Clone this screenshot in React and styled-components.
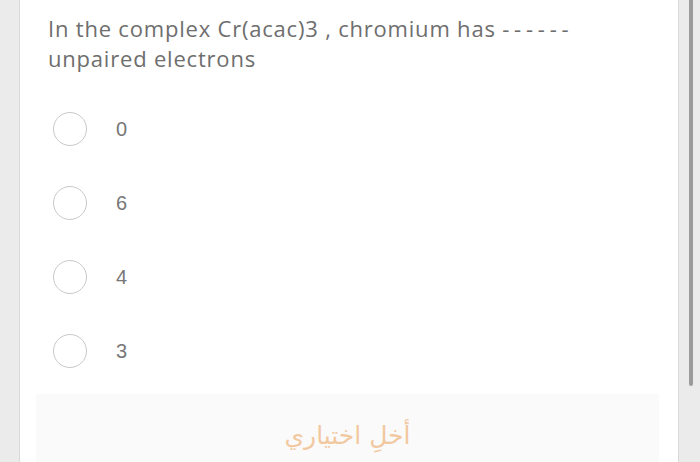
import React, { useState } from "react";
import styled, { createGlobalStyle } from "styled-components";

const GlobalStyle = createGlobalStyle`
  html, body {
    margin: 0;
    padding: 0;
    overflow: hidden;
    background: #ebebeb;
  }
`;

const Page = styled.div`
  display: flex;
  height: 462px;
  width: 700px;
  background: #ebebeb;
  overflow: hidden;
`;

const Card = styled.div`
  margin-left: 19px;
  width: 660px;
  border-left: 1px solid #dadada;
  border-right: 1px solid #dadada;
  background: #ffffff;
  padding: 13px 19px 0 16px;
  box-sizing: border-box;
  display: flex;
  flex-direction: column;
`;

const Content = styled.div`
  padding-left: 12px;
`;

const Question = styled.div`
  font-family: "Open Sans", "Liberation Sans", Arial, sans-serif;
  font-size: 22px;
  line-height: 30px;
  letter-spacing: 0.8px;
  color: #6e6e6e;
`;

const Blank = styled.span`
  letter-spacing: 4.8px;
`;

const Options = styled.div`
  margin-top: 19px;
  display: flex;
  flex-direction: column;
`;

const Option = styled.label`
  display: flex;
  align-items: center;
  height: 74px;
  gap: 29px;
  margin-left: 5px;
  cursor: pointer;
`;

const Radio = styled.span`
  width: 32px;
  height: 32px;
  border-radius: 50%;
  border: 1.5px solid ${(p) => (p.$checked ? "#888" : "#c9c9c9")};
  box-sizing: content-box;
  display: flex;
  align-items: center;
  justify-content: center;
  &::after {
    content: "";
    width: 15px;
    height: 15px;
    border-radius: 50%;
    background: ${(p) => (p.$checked ? "#888" : "transparent")};
  }
`;

const OptionText = styled.span`
  font-family: "Liberation Sans", Arial, sans-serif;
  font-size: 20px;
  color: #777777;
`;

const ClearPanel = styled.div`
  margin-top: 6px;
  height: 80px;
  background: #fafafa;
  display: flex;
  justify-content: center;
  padding-top: 22px;
  box-sizing: border-box;
`;

const ClearText = styled.span`
  font-family: "DejaVu Sans", sans-serif;
  font-size: 25px;
  line-height: 40px;
  color: #f2c8a0;
  direction: rtl;
`;

const Track = styled.div`
  flex: 1;
  display: flex;
  justify-content: flex-start;
  padding-left: 10px;
`;

const Thumb = styled.div`
  width: 4px;
  height: 386px;
  background: #9b9b9b;
  border-radius: 0 0 2px 2px;
`;

const answers = ["0", "6", "4", "3"];

export default function App() {
  const [selected, setSelected] = useState(null);

  return (
    <>
      <GlobalStyle />
      <Page>
        <Card>
          <Content>
            <Question>
              In the complex Cr(acac)3 , chromium has <Blank>------</Blank>
              <br />
              unpaired electrons
            </Question>
            <Options>
              {answers.map((a, i) => (
                <Option key={i} onClick={() => setSelected(i)}>
                  <Radio $checked={selected === i} />
                  <OptionText>{a}</OptionText>
                </Option>
              ))}
            </Options>
          </Content>
          <ClearPanel onClick={() => setSelected(null)}>
            <ClearText>أخلِ اختياري</ClearText>
          </ClearPanel>
        </Card>
        <Track>
          <Thumb />
        </Track>
      </Page>
    </>
  );
}
